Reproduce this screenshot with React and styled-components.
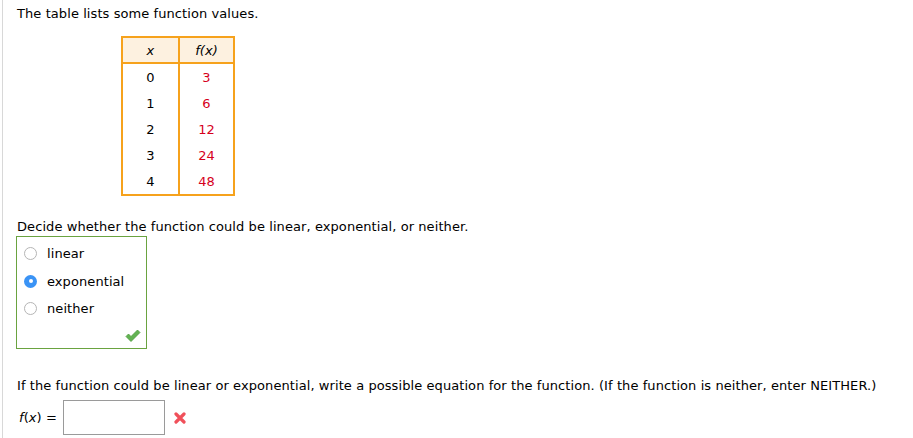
import React from "react";
import styled, { createGlobalStyle } from "styled-components";

const GlobalStyle = createGlobalStyle`
  html, body {
    margin: 0;
    padding: 0;
    background: #fff;
  }
  body {
    font-family: "DejaVu Sans", Verdana, sans-serif;
    font-size: 13px;
    letter-spacing: 0.08px;
    color: #000;
  }
`;

const Page = styled.div`
  margin-left: 2px;
  border-left: 1px solid #d8d8d8;
  min-height: 438px;
  box-sizing: border-box;
  padding: 4px 0 0 14px;
`;

const Para = styled.p`
  margin: 0;
  line-height: 20px;
`;

const TableWrap = styled.div`
  padding: 12px 0 0 104px;
`;

const ValueTable = styled.table`
  border-collapse: collapse;
  border: 2px solid #f6a21c;
`;

const HeadCell = styled.th`
  background: #fdf1e0;
  font-weight: normal;
  font-style: italic;
  height: 24px;
  width: ${(p) => p.$w}px;
  padding: 0;
  border-right: ${(p) => (p.$divider ? "2px solid #f6a21c" : "none")};
  border-bottom: 2px solid #f6a21c;
`;

const Cell = styled.td`
  text-align: center;
  height: 26px;
  padding: 0;
  color: ${(p) => (p.$red ? "#d6001c" : "#000")};
  border-right: ${(p) => (p.$divider ? "2px solid #f6a21c" : "none")};
`;

const Question = styled(Para)`
  margin-top: ${(p) => p.$top}px;
`;

const ChoiceBox = styled.div`
  width: 131px;
  height: 113px;
  margin: -1px 0 0 -1px;
  border: 1px solid #6aa340;
  box-sizing: border-box;
  position: relative;
  padding-top: 3px;
`;

const Choice = styled.label`
  display: flex;
  align-items: center;
  height: 27.5px;
  padding-left: 7px;
  gap: 10px;
`;

const Radio = styled.span`
  width: 13px;
  height: 13px;
  border-radius: 50%;
  box-sizing: border-box;
  border: ${(p) => (p.$on ? "none" : "1px solid #b5b5b5")};
  background: ${(p) => (p.$on ? "#3a93f5" : "#fff")};
  display: flex;
  align-items: center;
  justify-content: center;
  &::after {
    content: "";
    width: 4px;
    height: 4px;
    border-radius: 50%;
    background: #fff;
    display: ${(p) => (p.$on ? "block" : "none")};
  }
`;

const Check = styled.svg`
  position: absolute;
  right: 5px;
  bottom: 6px;
`;

const AnswerRow = styled.div`
  display: flex;
  align-items: center;
  margin-top: 4px;
  padding-left: 2px;
`;

const Label = styled.span`
  margin-right: 6px;
`;

const Input = styled.input`
  width: 102px;
  height: 35px;
  box-sizing: border-box;
  border: 1px solid #9a9a9a;
  margin: 0;
  font: inherit;
`;

const Cross = styled.svg`
  margin-left: 9px;
`;

const rows = [
  [0, 3],
  [1, 6],
  [2, 12],
  [3, 24],
  [4, 48],
];

export default function App() {
  return (
    <>
      <GlobalStyle />
      <Page>
        <Para>The table lists some function values.</Para>
        <TableWrap>
          <ValueTable>
            <thead>
              <tr>
                <HeadCell $w={55} $divider>x</HeadCell>
                <HeadCell $w={53}>f(x)</HeadCell>
              </tr>
            </thead>
            <tbody>
              {rows.map(([x, y]) => (
                <tr key={x}>
                  <Cell $divider>{x}</Cell>
                  <Cell $red>{y}</Cell>
                </tr>
              ))}
            </tbody>
          </ValueTable>
        </TableWrap>
        <Question $top={21}>
          Decide whether the function could be linear, exponential, or neither.
        </Question>
        <ChoiceBox>
          <Choice>
            <Radio />
            linear
          </Choice>
          <Choice>
            <Radio $on />
            exponential
          </Choice>
          <Choice>
            <Radio />
            neither
          </Choice>
          <Check width="16" height="13" viewBox="0 0 16 13">
            <path
              d="M1 7.5 L3.5 5 L6 7.5 L12.5 1 L15 3.5 L6 12.5 Z"
              fill="#62b352"
              stroke="#4c9a3e"
              strokeWidth="0.8"
              strokeLinejoin="round"
            />
          </Check>
        </ChoiceBox>
        <Question $top={27}>
          If the function could be linear or exponential, write a possible
          equation for the function. (If the function is neither, enter
          NEITHER.)
        </Question>
        <AnswerRow>
          <Label>
            <i>f</i>(<i>x</i>) =
          </Label>
          <Input type="text" />
          <Cross width="12" height="12" viewBox="0 0 12 12">
            <path
              d="M2 2 L10 10 M10 2 L2 10"
              stroke="#f0505a"
              strokeWidth="3.2"
              strokeLinecap="round"
            />
          </Cross>
        </AnswerRow>
      </Page>
    </>
  );
}
